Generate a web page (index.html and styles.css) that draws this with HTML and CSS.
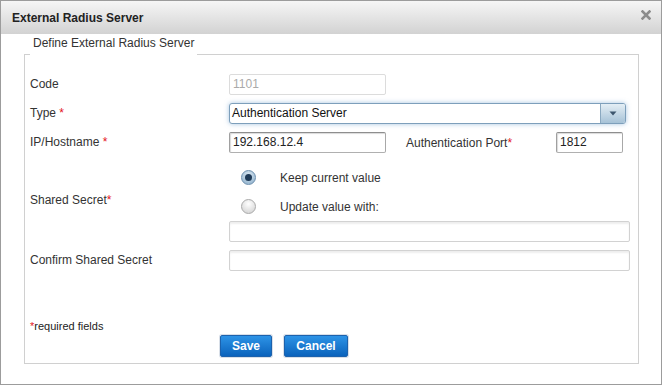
FILE: index.html
```html
<!DOCTYPE html>
<html>
<head>
<meta charset="utf-8">
<link rel="stylesheet" href="styles.css">
</head>
<body>
<div class="dialog">
  <div class="titlebar">
    <span class="title">External Radius Server</span>
    <span class="close"><svg width="10" height="10" viewBox="0 0 10 10"><path d="M1.5 1.5 L8.5 8.5 M8.5 1.5 L1.5 8.5" stroke="#8c8c8c" stroke-width="2.6" stroke-linecap="square"/></svg></span>
  </div>
  <fieldset class="panel">
    <legend>Define External Radius Server</legend>
    <div class="form">
      <label class="lbl r1">Code</label>
      <div class="fld r1"><span class="input code">1101</span></div>

      <label class="lbl r2">Type <span class="req-star">*</span></label>
      <div class="fld r2">
        <span class="select"><span class="select-text">Authentication Server</span><span class="select-btn"><svg width="8" height="5" viewBox="0 0 8 5"><path d="M0.5 0.5 H7.5 L4 4.5 Z" fill="#3d566e"/></svg></span></span>
      </div>

      <label class="lbl r3">IP/Hostname <span class="req-star">*</span></label>
      <div class="fld r3 iprow">
        <span class="input ip">192.168.12.4</span>
        <span class="port-lbl">Authentication Port<span class="req-star">*</span></span>
        <span class="input port">1812</span>
      </div>

      <label class="lbl secret-lbl">Shared Secret<span class="req-star">*</span></label>
      <div class="fld r4 radio-row"><span class="radio checked"></span><span class="radio-text">Keep current value</span></div>
      <div class="fld r5 radio-row"><span class="radio"></span><span class="radio-text">Update value with:</span></div>
      <div class="fld r6"><span class="input wide"></span></div>

      <label class="lbl r7">Confirm Shared Secret</label>
      <div class="fld r7"><span class="input wide"></span></div>
    </div>
    <div class="required"><span class="req-star">*</span>required fields</div>
    <div class="actions">
      <button class="btn save">Save</button>
      <button class="btn cancel">Cancel</button>
    </div>
  </fieldset>
</div>
</body>
</html>
```

FILE: styles.css
```css
html, body {
  margin: 0;
  padding: 0;
  background: #ffffff;
}
body {
  font-family: "Liberation Sans", Arial, sans-serif;
  font-size: 12px;
  color: #333333;
}
.dialog {
  width: 662px;
  height: 385px;
  box-sizing: border-box;
  border: 1px solid #9c9c9c;
  background: #ffffff;
  display: flex;
  flex-direction: column;
}
.titlebar {
  height: 33px;
  flex: none;
  display: flex;
  align-items: center;
  justify-content: space-between;
  padding: 0 10px 0 11px;
  background: linear-gradient(#f6f6f6, #d2d2d2);
}
.title {
  font-weight: bold;
  font-size: 12px;
  color: #222222;
}
.close {
  display: flex;
  width: 10px;
  height: 10px;
  position: relative;
  top: -3px;
}
.panel {
  margin: 2px 22px 0 23px;
  padding: 2px 8px 6px 5px;
  border: 1px solid #d0d0d0;
  min-width: 0;
}
.panel legend {
  padding: 0 3px 22px 3px;
  margin: 0;
  line-height: 14px;
  font-size: 12px;
  color: #333333;
}
.form {
  display: grid;
  grid-template-columns: 199px 1fr;
  grid-template-rows: 29px 29px 35px 29px 25px 29px 21px;
}
.lbl {
  grid-column: 1;
  height: 21px;
  line-height: 20px;
  align-self: start;
}
.fld {
  grid-column: 2;
  align-self: start;
  height: 21px;
  display: flex;
  align-items: center;
}
.r1 { grid-row: 1; }
.r2 { grid-row: 2; }
.r3 { grid-row: 3; }
.r4 { grid-row: 4; }
.r5 { grid-row: 5; }
.r6 { grid-row: 6; }
.r7 { grid-row: 7; }
.secret-lbl {
  grid-row: 4 / 7;
  align-self: center;
  margin-bottom: 17px;
}
.req-star {
  color: #e4141b;
}
.input {
  box-sizing: border-box;
  height: 21px;
  display: inline-block;
  border: 1px solid #b5b5b5;
  border-top-color: #9a9a9a;
  border-radius: 2px;
  padding: 0 3px;
  line-height: 19px;
  font-size: 12px;
  color: #222222;
  background: #ffffff;
  box-shadow: inset 0 1px 2px rgba(0,0,0,0.12);
}
.input.code {
  width: 157px;
  border-color: #dcdcdc;
  color: #aaaaaa;
  box-shadow: none;
}
.input.ip {
  width: 157px;
  border-color: #8e8e8e #a8a8a8 #b0b0b0 #a0a0a0;
  box-shadow: inset 1px 1px 1px rgba(0,0,0,0.15);
}
.input.port {
  width: 67px;
  border-color: #8e8e8e #a8a8a8 #b0b0b0 #a0a0a0;
  box-shadow: inset 1px 1px 1px rgba(0,0,0,0.15);
}
.input.wide {
  width: 401px;
  border-color: #d2d2d2;
  box-shadow: inset 0 2px 2px rgba(0,0,0,0.07);
}
.iprow .port-lbl {
  margin-left: 20px;
  width: 150px;
}
.select {
  box-sizing: border-box;
  width: 397px;
  height: 21px;
  display: flex;
  border: 1px solid #7d9fbb;
  border-radius: 3px;
  background: #ffffff;
  box-shadow: 0 0 5px rgba(96, 150, 200, 0.55);
  overflow: hidden;
}
.select-text {
  flex: 1;
  padding-left: 2px;
  line-height: 19px;
  color: #111111;
}
.select-btn {
  width: 24px;
  display: flex;
  align-items: center;
  justify-content: center;
  border-left: 1px solid #8aa8c0;
  background: linear-gradient(#e4eef5, #a6c2d7);
}
.radio-row {
  padding-left: 12px;
}
.radio {
  box-sizing: border-box;
  width: 15px;
  height: 15px;
  border-radius: 50%;
  border: 1px solid #a9a9a9;
  background: radial-gradient(circle at 50% 30%, #ffffff, #dadada 75%);
  display: flex;
  align-items: center;
  justify-content: center;
}
.radio.checked {
  border-color: #6c8fae;
  background: radial-gradient(circle at 50% 30%, #d8e6f1, #9dbbd3 75%);
}
.radio.checked::after {
  content: "";
  width: 7px;
  height: 7px;
  border-radius: 50%;
  background: #1e3a57;
}
.radio-text {
  margin-left: 24px;
}
.required {
  margin-top: 48px;
  line-height: 14px;
  font-size: 11px;
  color: #222222;
}
.actions {
  margin-top: 2px;
  padding-left: 190px;
  display: flex;
  gap: 12px;
}
.btn {
  box-sizing: border-box;
  height: 22px;
  padding: 0;
  border: 1px solid #1c62ad;
  border-radius: 2px;
  background: linear-gradient(#2d93e6, #0b63bc);
  color: #ffffff;
  font-family: "Liberation Sans", Arial, sans-serif;
  font-weight: bold;
  font-size: 12px;
  box-shadow: 0 0 0 1px #d8dfe8;
}
.btn.save { width: 52px; }
.btn.cancel { width: 64px; }
```
